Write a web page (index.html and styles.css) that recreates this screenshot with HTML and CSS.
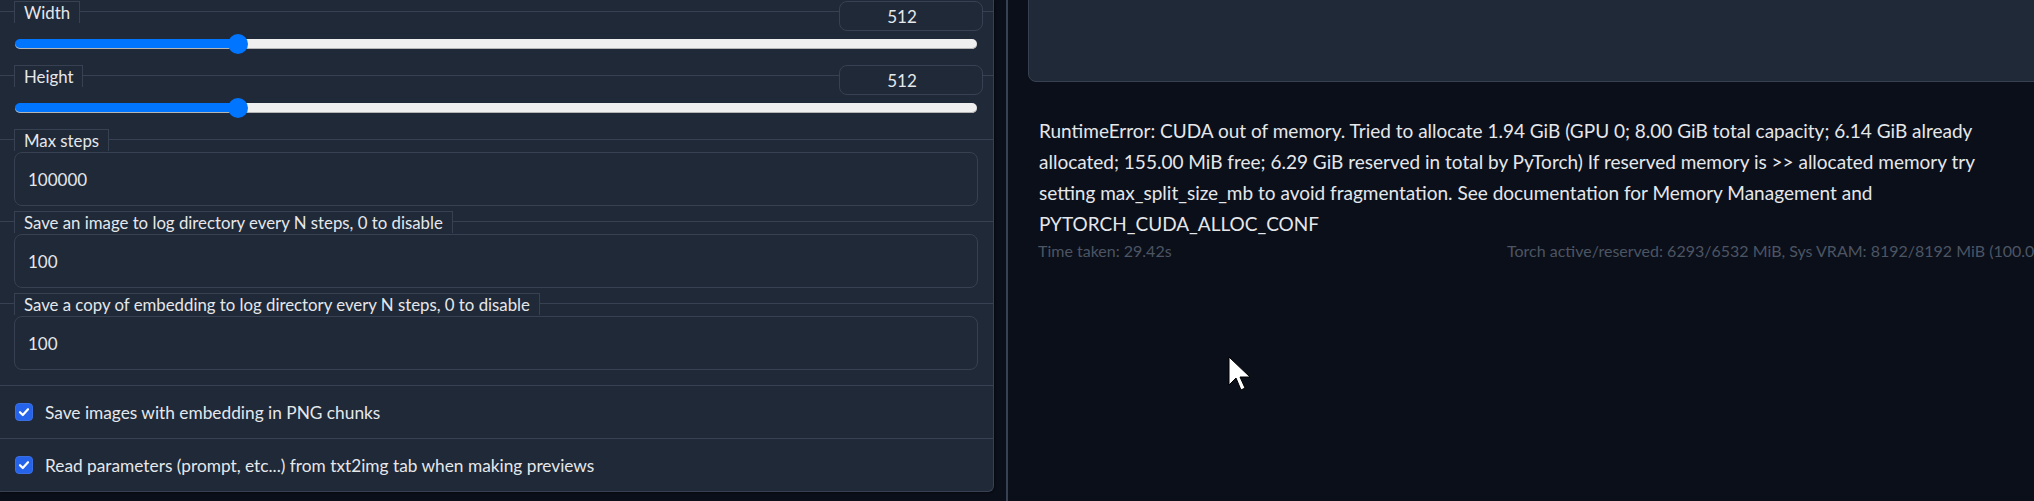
FILE: index.html
```html
<!DOCTYPE html>
<html lang="en">

<head>
    <meta charset="UTF-8">
    <meta name="viewport" content="width=device-width, initial-scale=1.0">
    <title>Train embedding</title>
    <link rel="stylesheet" href="styles.css">
</head>

<body>
    <div class="app">
        <!-- 左边的设置面板 -->
        <div class="left-col">
            <div class="panel">
                <div class="block slider-block">
                    <div class="block-head">
                        <span class="block-label">Width</span>
                        <input class="num-input" type="number" value="512">
                    </div>
                    <input class="range" type="range" min="64" max="2048" step="64" value="512" style="--fill: 22.58%">
                </div>
                <div class="block slider-block">
                    <div class="block-head">
                        <span class="block-label">Height</span>
                        <input class="num-input" type="number" value="512">
                    </div>
                    <input class="range" type="range" min="64" max="2048" step="64" value="512" style="--fill: 22.58%">
                </div>
                <div class="block text-block">
                    <div class="block-head">
                        <span class="block-label">Max steps</span>
                    </div>
                    <input class="text-input" type="text" value="100000">
                </div>
                <div class="block text-block">
                    <div class="block-head">
                        <span class="block-label">Save an image to log directory every N steps, 0 to disable</span>
                    </div>
                    <input class="text-input" type="text" value="100">
                </div>
                <div class="block text-block">
                    <div class="block-head">
                        <span class="block-label">Save a copy of embedding to log directory every N steps, 0 to disable</span>
                    </div>
                    <input class="text-input" type="text" value="100">
                </div>
                <label class="block check-block">
                    <input type="checkbox" checked>
                    <span>Save images with embedding in PNG chunks</span>
                </label>
                <label class="block check-block">
                    <input type="checkbox" checked>
                    <span>Read parameters (prompt, etc...) from txt2img tab when making previews</span>
                </label>
            </div>
        </div>

        <div class="divider"></div>

        <!-- 右边的输出区域 -->
        <div class="right-col">
            <div class="gallery"></div>
            <div class="error-text">RuntimeError: CUDA out of memory. Tried to allocate 1.94 GiB (GPU 0; 8.00 GiB total capacity; 6.14 GiB already allocated; 155.00 MiB free; 6.29 GiB reserved in total by PyTorch) If reserved memory is &gt;&gt; allocated memory try setting max_split_size_mb to avoid fragmentation. See documentation for Memory Management and PYTORCH_CUDA_ALLOC_CONF</div>
            <div class="perf">
                <span class="perf-time">Time taken: 29.42s</span>
                <span class="perf-mem">Torch active/reserved: 6293/6532 MiB, Sys VRAM: 8192/8192 MiB (100.0%)</span>
            </div>
        </div>
    </div>

    <!-- 鼠标指针 -->
    <svg class="cursor" width="24" height="36" viewBox="0 0 24 36">
        <path d="M1 1 L1 29 L8 22 L13 34 L17 32 L12 21 L22 21 Z" fill="#ffffff" stroke="#000000" stroke-width="1"/>
    </svg>
</body>

</html>
```

FILE: styles.css
```css
body {
    margin: 0px;
    background: #0b0f19;
    color: #e5e7eb;
    font-family: Lato, "Noto Sans", sans-serif;
    overflow: hidden;
}

.app {
    display: flex;
    height: 501px;
    width: 2034px;
}

.left-col {
    width: 994px;
    flex: none;
}

.panel {
    background: #1f2937;
    border-right: 1px solid #374151;
    border-bottom: 1px solid #374151;
    border-radius: 0px 0px 6px 0px;
    padding-top: 11px;
    box-shadow: 1px 1px 2px rgba(0, 0, 0, .4);
}

.block {
    border-top: 1px solid #374151;
    padding: 0px 10px 0px 14px;
}

.block-head {
    display: flex;
    justify-content: space-between;
    align-items: flex-start;
    margin-top: -11px;
}

.block-label {
    display: inline-block;
    height: 21px;
    line-height: 21px;
    padding: 0px 9px;
    border: 1px solid #374151;
    border-bottom: none;
    background: #1f2937;
    font-size: 16.8px;
    color: #e5e7eb;
}

.num-input {
    width: 144px;
    height: 30px;
    box-sizing: border-box;
    padding: 0px 18px 0px 0px;
    border: 1px solid #374151;
    border-radius: 8px;
    background: #1f2937;
    color: #e5e7eb;
    text-align: center;
    font-family: Lato, "Noto Sans", sans-serif;
    font-size: 17px;
    -moz-appearance: textfield;
}

.num-input::-webkit-inner-spin-button,
.num-input::-webkit-outer-spin-button {
    -webkit-appearance: none;
    margin: 0px;
}

.slider-block {
    height: 63px;
}

.range {
    -webkit-appearance: none;
    appearance: none;
    display: block;
    width: 962px;
    height: 20px;
    margin: 3px 0px 0px 1px;
    background: transparent;
}

.range::-webkit-slider-runnable-track {
    height: 10px;
    border-radius: 5px;
    box-sizing: border-box;
    background: linear-gradient(to right, #0075ff var(--fill), #efefef var(--fill));
    box-shadow: inset 0px -1px 0px #b5b5b5;
}

.range::-webkit-slider-thumb {
    -webkit-appearance: none;
    width: 20px;
    height: 20px;
    margin-top: -5px;
    border-radius: 50%;
    background: #0075ff;
}

.text-block {
    height: 81px;
}

.text-input {
    display: block;
    width: 964px;
    height: 54px;
    box-sizing: border-box;
    margin-top: 1px;
    padding: 0px 13px;
    border: 1px solid #374151;
    border-radius: 8px;
    background: #1f2937;
    color: #e5e7eb;
    font-family: Lato, "Noto Sans", sans-serif;
    font-size: 17px;
}

.check-block {
    display: flex;
    align-items: center;
    gap: 12px;
    height: 52px;
    padding-left: 15px;
    font-size: 17.3px;
    color: #e5e7eb;
}

.check-block input {
    -webkit-appearance: none;
    appearance: none;
    width: 18px;
    height: 18px;
    margin: 0px;
    border-radius: 4px;
    background: #2563eb url("data:image/svg+xml;utf8,<svg xmlns='http://www.w3.org/2000/svg' viewBox='0 0 16 16'><path d='M4 8.2 L6.8 11 L12 5.2' fill='none' stroke='white' stroke-width='2.2' stroke-linecap='round' stroke-linejoin='round'/></svg>") center / 16px 16px no-repeat;
    border: 1px solid #3b6fe0;
    box-sizing: border-box;
}

.divider {
    width: 12px;
    flex: none;
    border-right: 2px solid #374151;
}

.right-col {
    flex: 1;
    padding-left: 20px;
    overflow: hidden;
}

.gallery {
    height: 90px;
    width: 1100px;
    margin-top: -10px;
    background: #1f2937;
    border: 1px solid #374151;
    border-radius: 0px 0px 0px 8px;
}

.error-text {
    width: 980px;
    margin: 33px 0px 0px 11px;
    font-size: 19px;
    line-height: 31px;
    color: #e5e7eb;
}

.perf {
    display: flex;
    white-space: nowrap;
    margin: 2px 0px 0px 10px;
    font-size: 16px;
    line-height: 20px;
    color: #4b5563;
}

.perf-time {
    width: 469px;
    flex: none;
}

.cursor {
    position: absolute;
    left: 1228px;
    top: 356px;
}
```
